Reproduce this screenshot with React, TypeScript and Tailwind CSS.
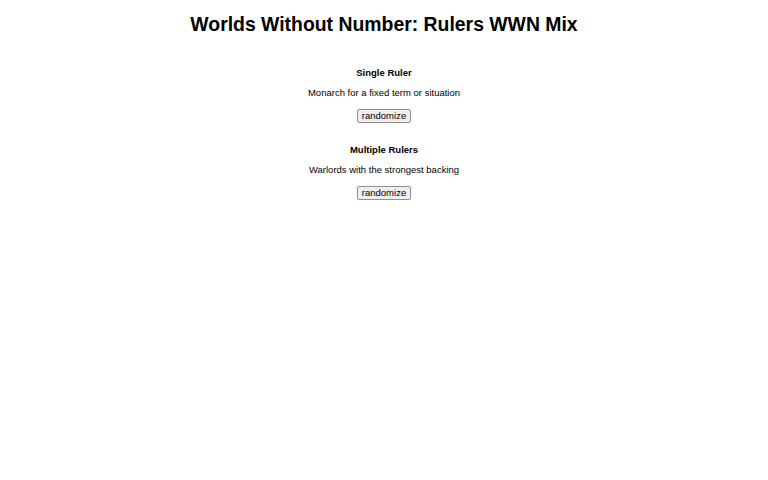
const rulers = [
  { name: "Single Ruler", blurb: "Monarch for a fixed term or situation" },
  { name: "Multiple Rulers", blurb: "Warlords with the strongest backing" },
];

const RulerTable = ({ name, blurb }: { name: string; blurb: string }) => {
  return (
    <div className="flex flex-col items-center">
      <p className="text-[9.5px] leading-[12px] font-bold">{name}</p>
      <p className="text-[9.5px] leading-[12px] mt-[8px]">{blurb}</p>
      <button className="mt-[10px] h-[14px] px-[4px] text-[9.5px] leading-[12px] bg-[#efefef] border border-[#8f8f8f] rounded-[2px]">
        randomize
      </button>
    </div>
  );
};

export default function App() {
  return (
    <div className="w-[768px] h-[480px] bg-white text-black font-['Liberation_Sans',Arial,sans-serif]">
      <h1 className="pt-[12px] text-center text-[19.4px] leading-[24px] font-bold">
        Worlds Without Number: Rulers WWN Mix
      </h1>
      <div className="mt-[31px] flex flex-col gap-[21px]">
        {rulers.map((r) => (
          <RulerTable key={r.name} name={r.name} blurb={r.blurb} />
        ))}
      </div>
    </div>
  );
}
